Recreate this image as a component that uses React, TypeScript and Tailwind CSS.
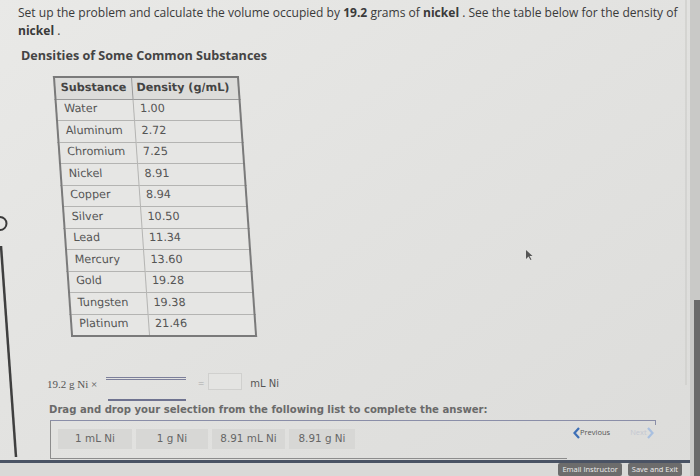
import React from "react";

const rows: [string, string][] = [
  ["Water", "1.00"],
  ["Aluminum", "2.72"],
  ["Chromium", "7.25"],
  ["Nickel", "8.91"],
  ["Copper", "8.94"],
  ["Silver", "10.50"],
  ["Lead", "11.34"],
  ["Mercury", "13.60"],
  ["Gold", "19.28"],
  ["Tungsten", "19.38"],
  ["Platinum", "21.46"],
];

const chips = [
  { t: "1 mL Ni", w: "w-[74px]" },
  { t: "1 g Ni", w: "w-[72px]" },
  { t: "8.91 mL Ni", w: "w-[73px]" },
  { t: "8.91 g Ni", w: "w-[66px]" },
];

export default function App() {
  return (
    <div className="relative w-[700px] h-[476px] overflow-hidden bg-gradient-to-br from-[#e9e9e7] via-[#e2e2e0] to-[#dcdcda] font-['Open_Sans',sans-serif] text-[#3a3a3a]">
      <div className="flex flex-col h-full">
        {/* question */}
        <div className="pl-[18px] pr-[14px] pt-[4px] text-[12.05px] leading-[17.5px]">
          Set up the problem and calculate the volume occupied by <b>19.2</b> grams of <b>nickel</b> . See the table below for the density of <b>nickel</b> .
        </div>
        <div className="pl-[21px] pt-[8px] text-[12.6px] font-bold text-[#444]">Densities of Some Common Substances</div>

        {/* table */}
        <div className="pl-[62px] pt-[10px]">
          <table className="skew-x-[4deg] w-[186px] border-collapse border-2 border-[#7a7a7a] font-['DejaVu_Sans',sans-serif] text-[11.2px] text-[#555]">
            <thead>
              <tr className="h-[22px] bg-[#dcdcda]">
                <th className="w-[76px] border border-[#9a9a9a] px-[5px] text-left font-bold text-[#444]">Substance</th>
                <th className="border border-[#9a9a9a] px-[4px] text-left font-bold text-[#444]">Density (g/mL)</th>
              </tr>
            </thead>
            <tbody>
              {rows.map(([s, d]) => (
                <tr key={s} className="h-[21.5px] bg-[#e6e6e4]">
                  <td className="border border-[#b4b4b2] px-[7px]">{s}</td>
                  <td className="border border-[#b4b4b2] px-[6px]">{d}</td>
                </tr>
              ))}
            </tbody>
          </table>
        </div>

        {/* equation */}
        <div className="flex items-start pl-[47px] pt-[37px]">
          <div className="w-[58px] pt-[3px] font-['Liberation_Serif',serif] text-[11px] text-[#555]">19.2 g Ni ×</div>
          <div className="ml-[1px] flex flex-col">
            <div className="mt-[4px] w-[80px] h-[3px] border-t border-b border-[#7c7f9a]" />
            <div className="mt-[19px] ml-[2px] w-[78px] h-[2px] bg-[#6f7390]" />
          </div>
          <div className="ml-[12px] pt-[2px] text-[11px] text-[#aaa]">=</div>
          <div className="ml-[4px] w-[34px] h-[17px] border border-[#d0d0ce] bg-[#e4e4e2]" />
          <div className="ml-[8px] pt-[3px] font-['DejaVu_Sans',sans-serif] text-[10px] text-[#555]">mL Ni</div>
        </div>

        <div className="pl-[49px] pt-[1px] font-['DejaVu_Sans',sans-serif] text-[10.1px] font-bold text-[#6a6a6a]">
          Drag and drop your selection from the following list to complete the answer:
        </div>

        {/* answer area */}
        <div className="ml-[50px] mt-[2px] w-[606px] border-t border-[#8a8ea8] flex">
          <div className="w-[517px] h-[38px] border-l border-b border-[#8c8c8c] flex items-center gap-[4px] pl-[7px]">
            {chips.map((c) => (
              <div key={c.t} className={`${c.w} h-[20px] bg-[#d7d7d5] flex items-center justify-center font-['DejaVu_Sans',sans-serif] text-[10.4px] text-[#666]`}>
                {c.t}
              </div>
            ))}
          </div>
          <div className="flex-1 relative flex items-start pt-[6px] pl-[6px] gap-[20px] text-[7.5px]">
            <div className="absolute right-0 top-0 h-[4px] border-r border-[#8a8ea8]" />
            <div className="flex items-center text-[#555]">
              <svg width="7" height="12" viewBox="0 0 7 12"><path d="M6 1 L1.5 6 L6 11" fill="none" stroke="#3d6fb6" strokeWidth="2.2" /></svg>
              <span>Previous</span>
            </div>
            <div className="flex items-center text-[#c4c8d2]">
              <span>Next</span>
              <svg width="7" height="12" viewBox="0 0 7 12"><path d="M1 1 L5.5 6 L1 11" fill="none" stroke="#a9c0e0" strokeWidth="2.2" /></svg>
            </div>
          </div>
        </div>

        {/* bottom bar */}
        <div className="mt-[1px] w-[690px] h-[5px] bg-[#4a5364]" />
        <div className="flex-1 w-[690px] bg-[#d9d9d7] flex justify-end items-start gap-[6px] pr-[8px] pt-[0px]">
          <div className="px-[4px] h-[13px] bg-[#6c6c6c] rounded-[2px] flex items-center text-[7.5px] text-[#eee]">Email Instructor</div>
          <div className="px-[4px] h-[13px] bg-[#6c6c6c] rounded-[2px] flex items-center text-[7.5px] text-[#eee]">Save and Exit</div>
        </div>
      </div>

      {/* photo frame artifacts */}
      <svg className="absolute left-0 top-0 pointer-events-none" width="700" height="476">
        <path d="M0 217 A6 6 0 0 1 0 230" fill="none" stroke="#3a3a3a" strokeWidth="2" />
        <line x1="1" y1="246" x2="16" y2="457" stroke="#3f3f3f" strokeWidth="2.5" />
        <line x1="686" y1="0" x2="686" y2="385" stroke="#cfcfcd" strokeWidth="1.5" />
        <rect x="690" y="0" width="10" height="476" fill="#c9c9c7" />
        <rect x="694" y="300" width="6" height="176" fill="#6a6a6a" />
        <path d="M526 250 L526 259 L528.5 256.5 L530.5 260 L531.5 259.5 L529.5 256 L532.5 256 Z" fill="#555" />
      </svg>
    </div>
  );
}
